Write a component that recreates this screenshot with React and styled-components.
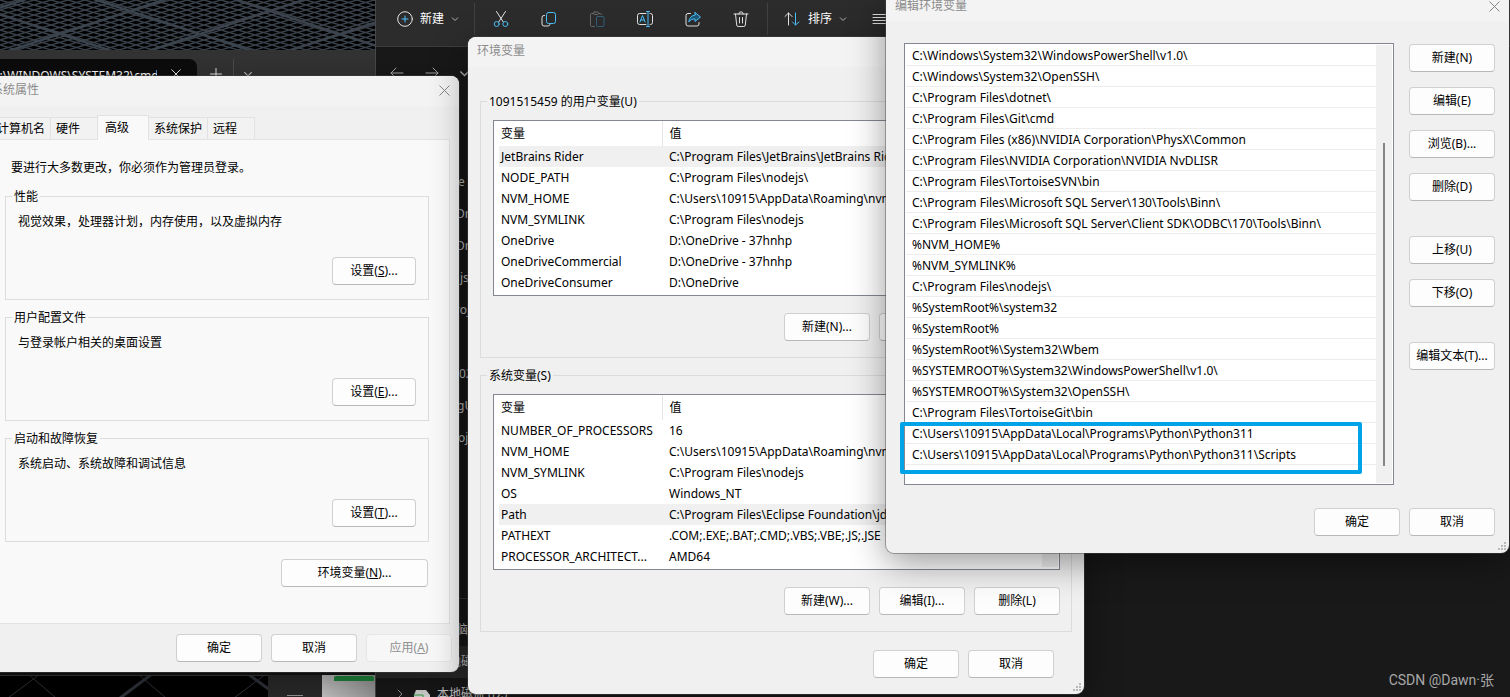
import React, { useState } from "react"
import styled, { createGlobalStyle } from "styled-components"

const GlobalStyle = createGlobalStyle`
  * {
    box-sizing: border-box;
  }

  body {
    margin: 0;
    background: #191919;
    font-family: "Noto Sans", "Noto Sans CJK SC", sans-serif;
    font-size: 12px;
    line-height: 16px;
    color: #000;
  }

  ul {
    list-style: none;
    margin: 0;
    padding: 0;
  }
`

const Desktop = styled.main`
  position: relative;
  height: 100vh;
  overflow: hidden;
  display: grid;
  grid-template-columns: 375px 1fr;
  grid-template-rows: minmax(0, 1fr);
`

/* ---------- things behind the dialogs ---------- */

const LeftSide = styled.div`
  display: flex;
  flex-direction: column;
  background: #000;
  overflow: hidden;
`

const Wallpaper = styled.svg`
  display: block;
  width: 100%;
  height: 50px;
  flex: none;
`

const Terminal = styled.section`
  flex: 1;
  background: #333;
  display: flex;
  align-items: flex-start;
  padding-top: 9px;
  color: #fff;
`

const TerminalTab = styled.div`
  width: 197px;
  height: 34px;
  padding-right: 16px;
  display: flex;
  align-items: center;
  justify-content: space-between;
  border-radius: 0 8px 0 0;
  background: #0c0c0c;

  span {
    width: 157px;
    overflow: hidden;
    white-space: nowrap;
    text-indent: -8px;
  }
  svg {
    margin-bottom: 4px;
  }
`

const TerminalButton = styled.button`
  width: ${p => p.$width}px;
  height: 30px;
  padding: 0;
  border: 0;
  border-left: 1px solid ${p => (p.$divider ? "#4c4c4c" : "transparent")};
  background: none;
  color: #ddd;
  display: flex;
  align-items: center;
  justify-content: center;
`

const BottomStrip = styled.div`
  height: 25px;
  display: flex;
  border-top: 3px solid #141414;
  flex: none;

  > svg {
    flex: 1;
    min-width: 0;
    height: 22px;
    border-top: 1px solid #3a3a3a;
  }
`

const DarkBlock = styled.div`
  width: 54px;
  background: #2b2b2b;
  display: flex;
  align-items: flex-end;
  justify-content: center;
  padding-bottom: 1px;

  i {
    width: 16px;
    height: 1px;
    background: #999;
  }
`

const LightBlock = styled.div`
  width: 53px;
  padding: 1px 1px 0 12px;
  background: linear-gradient(90deg, #c9c9c9, #999);

  i {
    display: block;
    height: 5px;
    border-radius: 2px 2px 0 0;
    background: #1f8a3b;
  }
`

const Explorer = styled.section`
  border-left: 1px solid #484848;
  background: #191919;
  color: #fff;
  overflow: hidden;
`

const Toolbar = styled.header`
  height: 47px;
  padding-bottom: 8px;
  display: flex;
  align-items: center;
  background: #2c2c2c;
  border-bottom: 1px solid #3d3d3d;
`

const ToolButton = styled.button`
  width: ${p => p.$width || 48}px;
  height: 38px;
  padding: 0 0 0 ${p => p.$inset || 0}px;
  border: 0;
  background: none;
  color: #fff;
  font: inherit;
  display: flex;
  align-items: center;
  justify-content: center;
  gap: 7px;
`

const ToolDivider = styled.i`
  width: 1px;
  height: 32px;
  margin: 0 2px;
  background: #424242;
`

const NavBar = styled.div`
  height: 52px;
  padding-left: 13px;
  display: flex;
  align-items: center;
  gap: 19px;
  color: #aaa;
`

const SideRow = styled.li`
  width: 200px;
  height: 32px;
  padding-left: ${p => p.$indent || 0}px;
  display: flex;
  align-items: center;
  gap: 5px;
  color: #ccc;
  white-space: nowrap;
  background: ${p => (p.$active ? "#2d2d2d" : "none")};
`

const SideLine = styled.i`
  flex: 1;
  height: 1px;
  background: #3a3a3a;
`

const SideList = styled.ul`
  padding-top: 67px;
`

/* ---------- dialog parts ---------- */

const Dialog = styled.section`
  position: absolute;
  left: ${p => p.$x}px;
  top: ${p => p.$y}px;
  width: ${p => p.$width}px;
  border-radius: 8px;
  overflow: hidden;
  background: #f0f0f0;
  box-shadow: 0 0 0 1px rgba(70, 70, 70, 0.45), 0 10px 36px rgba(0, 0, 0, 0.4);
`

const TitleBar = styled.header`
  height: 30px;
  padding: 0 9px 2px;
  display: flex;
  align-items: center;
  justify-content: space-between;
  background: #f3f3f3;
  color: #8c8c8c;

  h1 {
    margin: 0;
    font-size: 12px;
    font-weight: 400;
  }

  button {
    padding: 0;
    border: 0;
    background: none;
    display: flex;
    color: #868686;
  }
`

const Button = styled.button`
  width: ${p => p.$width || 86}px;
  height: 28px;
  padding: 0;
  flex: none;
  border: 1px solid #d0d0d0;
  border-bottom-color: #b8b8b8;
  border-radius: 4px;
  background: #fdfdfd;
  color: #000;
  font: inherit;
  white-space: nowrap;

  &:hover {
    background: #e5f1fb;
  }
  &:disabled {
    border-color: #e6e6e6;
    background: #f7f7f7;
    color: #8f8f8f;
  }
`

const ButtonRow = styled.div`
  display: flex;
  justify-content: flex-end;
  gap: 9px;
  padding: ${p => p.$pad || 0};
`

const Group = styled.fieldset`
  min-width: 0;
  margin: 0 0 8px;
  padding: ${p => p.$pad};
  border: 1px solid #dcdcdc;

  legend {
    margin-left: -6px;
    padding: 2px 2px 0;
  }
  p {
    margin: 9px 0 27px;
  }
`

const Grip = styled.svg`
  position: absolute;
  right: 2px;
  bottom: 2px;
`

/* system properties */

const Tabs = styled.div`
  display: flex;
  align-items: flex-end;
  height: 24px;
  margin: 9px 0 0 9px;
`

const Tab = styled.button`
  height: ${p => (p.$active ? 25 : 22)}px;
  min-width: ${p => (p.$active ? 52 : 48)}px;
  margin: 0 -1px ${p => (p.$active ? -1 : 0)}px 0;
  padding: 0 ${p => (p.$active ? 7 : 5)}px;
  position: relative;
  border: 1px solid #e2e2e2;
  border-bottom: 0;
  background: ${p => (p.$active ? "#f9f9f9" : "#f2f2f2")};
  font: inherit;
  color: #000;
  text-align: left;
`

const TabPanel = styled.div`
  margin: 0 9px 0 8px;
  padding: 20px 20px 36px 14px;
  border: 1px solid #e2e2e2;
  background: #f9f9f9;
`

const Notice = styled.p`
  margin: 0 0 11px 6px;
`

/* variables */

const GroupBody = styled.div`
  padding: 25px 12px 0;
`

const TableFrame = styled.div`
  display: flex;
  margin: 10px 0 17px;
  padding: 0 1px 2px 5px;
  border: 1px solid #828790;
  background: #fff;
`

const Table = styled.table`
  flex: 1;
  table-layout: fixed;
  border-collapse: collapse;
  white-space: nowrap;
  overflow: hidden;

  th,
  td {
    height: 21px;
    padding: 0 0 0 7px;
    font-weight: 400;
    text-align: left;
    overflow: hidden;
  }
  th {
    height: 25px;
  }
  th:first-child {
    width: 163px;
    border-right: 1px solid #e5e5e5;
  }
  th:first-child,
  td:first-child {
    padding-left: 2px;
  }
`

const Row = styled.tr`
  background: ${p => (p.$selected ? "#f0f0f0" : "none")};
`

const Track = styled.div`
  width: 16px;
  flex: none;
  background: #f0f0f0;
`

/* path editor */

const Editor = styled.div`
  display: flex;
  gap: 15px;
  padding: 21px 14px 0 18px;
`

const PathFrame = styled.div`
  position: relative;
  flex: 1;
  display: flex;
  padding: 1px;
  border: 1px solid #828790;
  background: #fff;

  ul {
    flex: 1;
    padding-bottom: 18px;
  }
`

const PathRow = styled.li`
  height: 21px;
  padding-left: 6px;
  line-height: 22px;
  border-bottom: 1px solid #ededed;
  white-space: nowrap;
`

const Thumb = styled.div`
  width: 2px;
  height: 323px;
  margin: 98px 0 0 7px;
  background: #868686;
`

const Marker = styled.div`
  position: absolute;
  left: -5px;
  top: 378px;
  width: 462px;
  height: 52px;
  border: 4px solid #00a2e8;
  border-radius: 2px;
`

const ButtonColumn = styled.div`
  display: flex;
  flex-direction: column;
  gap: 15px;
  padding-top: 1px;
`

const Spacer = styled.i`
  height: 5px;
`

const Watermark = styled.footer`
  position: absolute;
  right: 16px;
  bottom: 7px;
  font-family: Roboto, "Noto Sans CJK SC", sans-serif;
  font-size: 14px;
  line-height: 20px;
  color: #a8a8a8;
`

const userVars = [
  ["JetBrains Rider", "C:\\Program Files\\JetBrains\\JetBrains Rider"],
  ["NODE_PATH", "C:\\Program Files\\nodejs\\"],
  ["NVM_HOME", "C:\\Users\\10915\\AppData\\Roaming\\nvm"],
  ["NVM_SYMLINK", "C:\\Program Files\\nodejs"],
  ["OneDrive", "D:\\OneDrive - 37hnhp"],
  ["OneDriveCommercial", "D:\\OneDrive - 37hnhp"],
  ["OneDriveConsumer", "D:\\OneDrive"],
]

const systemVars = [
  ["NUMBER_OF_PROCESSORS", "16"],
  ["NVM_HOME", "C:\\Users\\10915\\AppData\\Roaming\\nvm"],
  ["NVM_SYMLINK", "C:\\Program Files\\nodejs"],
  ["OS", "Windows_NT"],
  ["Path", "C:\\Program Files\\Eclipse Foundation\\jdk"],
  ["PATHEXT", ".COM;.EXE;.BAT;.CMD;.VBS;.VBE;.JS;.JSE"],
  ["PROCESSOR_ARCHITECT...", "AMD64"],
]

const paths = [
  "C:\\Windows\\System32\\WindowsPowerShell\\v1.0\\",
  "C:\\Windows\\System32\\OpenSSH\\",
  "C:\\Program Files\\dotnet\\",
  "C:\\Program Files\\Git\\cmd",
  "C:\\Program Files (x86)\\NVIDIA Corporation\\PhysX\\Common",
  "C:\\Program Files\\NVIDIA Corporation\\NVIDIA NvDLISR",
  "C:\\Program Files\\TortoiseSVN\\bin",
  "C:\\Program Files\\Microsoft SQL Server\\130\\Tools\\Binn\\",
  "C:\\Program Files\\Microsoft SQL Server\\Client SDK\\ODBC\\170\\Tools\\Binn\\",
  "%NVM_HOME%",
  "%NVM_SYMLINK%",
  "C:\\Program Files\\nodejs\\",
  "%SystemRoot%\\system32",
  "%SystemRoot%",
  "%SystemRoot%\\System32\\Wbem",
  "%SYSTEMROOT%\\System32\\WindowsPowerShell\\v1.0\\",
  "%SYSTEMROOT%\\System32\\OpenSSH\\",
  "C:\\Program Files\\TortoiseGit\\bin",
  "C:\\Users\\10915\\AppData\\Local\\Programs\\Python\\Python311",
  "C:\\Users\\10915\\AppData\\Local\\Programs\\Python\\Python311\\Scripts",
]

const sections = [
  { title: "性能", text: "视觉效果，处理器计划，内存使用，以及虚拟内存", key: "S" },
  { title: "用户配置文件", text: "与登录帐户相关的桌面设置", key: "E" },
  { title: "启动和故障恢复", text: "系统启动、系统故障和调试信息", key: "T" },
]

const sideItems = [
  { text: "e", indent: 82 },
  { text: "Dr", indent: 80 },
  { text: "Dr", indent: 80 },
  { text: "js", indent: 84 },
  { text: "roj", indent: 79 },
  {},
  { text: "02", indent: 83 },
  { text: "gU", indent: 81 },
  { text: "oj", indent: 82 },
  {},
  {},
  {},
  {},
  { line: true },
  { text: "此电脑", indent: 56 },
  { text: "本地磁盘", indent: 61, active: true },
]

const W = "#e6e6e6"
const B = "#4cc2ff"

function Icon({ size = 18, children }) {
  return (
    <svg width={size} height={size} viewBox={`0 0 ${size} ${size}`} fill="none" stroke={W} strokeLinecap="round" strokeLinejoin="round" aria-hidden="true">
      {children}
    </svg>
  )
}

const Chevron = ({ size = 8 }) => (
  <svg width={size} height={size} viewBox="0 0 8 8" fill="none" stroke="#b5b5b5" aria-hidden="true">
    <path d="M1 2.5l3 3 3-3" />
  </svg>
)

const Cross = ({ size = 11 }) => (
  <svg width={size} height={size} viewBox="0 0 11 11" fill="none" stroke="currentColor" aria-hidden="true">
    <path d="M.5 .5l10 10M10.5 .5l-10 10" />
  </svg>
)

function MeshWallpaper() {
  return (
    <Wallpaper aria-hidden="true">
      <defs>
        <pattern id="mesh" width="17" height="5" patternUnits="userSpaceOnUse">
          <path d="M-3.4 -1L20.4 6M-3.4 6L20.4 -1" stroke="#3a424c" strokeWidth="1.3" />
        </pattern>
        <pattern id="bands" width="140" height="46" x="60" y="-12" patternUnits="userSpaceOnUse">
          <path d="M-7 -2.3L147 48.3M-7 48.3L147 -2.3" stroke="#3b434d" strokeWidth="2.5" />
        </pattern>
      </defs>
      <rect width="100%" height="50" fill="#000" />
      <rect width="100%" height="50" fill="url(#mesh)" />
      <rect width="100%" height="50" fill="url(#bands)" />
    </Wallpaper>
  )
}

function ExplorerWindow() {
  return (
    <Explorer>
      <Toolbar>
        <ToolButton $width={96} $inset={8}>
          <Icon size={16}>
            <circle cx="8" cy="8" r="7.3" />
            <path d="M8 5v6M5 8h6" stroke={B} />
          </Icon>
          <span>新建</span>
          <Chevron />
        </ToolButton>
        <ToolDivider />
        <ToolButton aria-label="剪切">
          <Icon>
            <path d="M4.5 1.5l6.8 10.5M13.5 1.5L6.7 12" />
            <circle cx="4.7" cy="14" r="2.5" stroke={B} />
            <circle cx="13.3" cy="14" r="2.5" stroke={B} />
          </Icon>
        </ToolButton>
        <ToolButton aria-label="复制">
          <Icon>
            <path d="M4.5 5.5H4a2 2 0 0 0-2 2V14a2 2 0 0 0 2 2h4a2 2 0 0 0 2-1.5" />
            <rect x="6.5" y="2.5" width="9" height="11" rx="2" stroke={B} />
          </Icon>
        </ToolButton>
        <ToolButton aria-label="粘贴">
          <Icon>
            <path d="M5.5 3.500h-2a1 1 0 0 0-1 1v11a1 1 0 0 0 1 1h3M10.5 3.500h2a1 1 0 0 1 1 1" stroke="#6b6b6b" />
            <rect x="5.5" y="2" width="5" height="2.5" rx="1" stroke="#6b6b6b" />
            <rect x="8.5" y="6.5" width="7.5" height="10" rx="1" stroke="#35617a" />
          </Icon>
        </ToolButton>
        <ToolButton aria-label="重命名">
          <Icon>
            <path d="M10 3.500H3.500a2 2 0 0 0-2 2v7a2 2 0 0 0 2 2H10M14 3.500h.5a2 2 0 0 1 2 2v7a2 2 0 0 1-2 2H14" />
            <path d="M12 1.500v15M10.500 1.500h3M10.500 16.500h3M4 12l2.500-6.500L9 12M5 10h3" stroke={B} />
          </Icon>
        </ToolButton>
        <ToolButton aria-label="共享">
          <Icon>
            <path d="M6.500 3.500H4a2 2 0 0 0-2 2V14a2 2 0 0 0 2 2h9a2 2 0 0 0 2-2v-1.500" />
            <path d="M11 2.500l5.500 4.500-5.500 4.500V9C8 8.800 6.200 10 4.800 12 5.200 8 7.500 5.400 11 5z" stroke={B} fill="#1f5877" />
          </Icon>
        </ToolButton>
        <ToolButton aria-label="删除">
          <Icon>
            <path d="M2 4h14M6.800 4a2.200 2.200 0 0 1 4.400 0M3.500 4l1.200 11a1.500 1.500 0 0 0 1.500 1.500h5.600a1.500 1.500 0 0 0 1.500-1.500L14.500 4M7.500 7.500v5.500M10.500 7.500v5.500" />
          </Icon>
        </ToolButton>
        <ToolDivider />
        <ToolButton $width={90}>
          <Icon>
            <path d="M5.500 15V3M2 6.500L5.500 3 9 6.500" />
            <path d="M12.500 3v12M9.500 12l3 3 3.500-3" stroke={B} />
          </Icon>
          <span>排序</span>
          <Chevron />
        </ToolButton>
        <ToolButton $width={40} aria-label="查看">
          <Icon size={16}>
            <path d="M1 3.500h14M1 6.500h14M1 9.500h14M1 12.500h14" />
          </Icon>
        </ToolButton>
      </Toolbar>
      <NavBar>
        <Icon size={16}>
          <path d="M14 8H2M7 3L2 8l5 5" stroke="#aaa" />
        </Icon>
        <Icon size={16}>
          <path d="M2 8h12M9 3l5 5-5 5" stroke="#aaa" />
        </Icon>
        <Chevron size={11} />
      </NavBar>
      <SideList>
        {sideItems.map((item, i) => (
          <SideRow key={i} $indent={item.indent} $active={item.active}>
            {item.line ? <SideLine /> : item.text}
          </SideRow>
        ))}
        <SideRow $indent={19}>
          <Icon size={10}>
            <path d="M3 1l4 4-4 4" stroke="#999" />
          </Icon>
          <Icon size={22}>
            <path d="M6 7h10l4 5v5H4v-5z" fill="#d8d8d8" stroke="none" />
            <path d="M4 12h9v4" stroke="#2ea043" />
          </Icon>
          本地磁盘 (D:)
        </SideRow>
      </SideList>
    </Explorer>
  )
}

function DialogWindow({ title, x, y, width, closable, grip, children }) {
  return (
    <Dialog $x={x} $y={y} $width={width} role="dialog" aria-label={title}>
      <TitleBar>
        <h1>{title}</h1>
        {closable && (
          <button aria-label="关闭">
            <Cross />
          </button>
        )}
      </TitleBar>
      {children}
      {grip && (
        <Grip width="9" height="9" fill="#b9b9b9" aria-hidden="true">
          <path d="M6 0h2v2H6zM3 3h2v2H3zM6 3h2v2H6zM0 6h2v2H0zM3 6h2v2H3zM6 6h2v2H6z" />
        </Grip>
      )}
    </Dialog>
  )
}

function SystemProperties() {
  const [tab, setTab] = useState("高级")

  return (
    <DialogWindow title="系统属性" x={-18} y={76} width={477} closable>
      <Tabs role="tablist">
        {["计算机名", "硬件", "高级", "系统保护", "远程"].map(name => (
          <Tab key={name} role="tab" aria-selected={tab === name} $active={tab === name} onClick={() => setTab(name)}>
            {name}
          </Tab>
        ))}
      </Tabs>
      <TabPanel role="tabpanel">
        <Notice>要进行大多数更改，你必须作为管理员登录。</Notice>
        {sections.map(s => (
          <Group key={s.title} $pad="0 12px 14px">
            <legend>{s.title}</legend>
            <p>{s.text}</p>
            <ButtonRow>
              <Button $width={84}>
                设置(<u>{s.key}</u>)...
              </Button>
            </ButtonRow>
          </Group>
        ))}
        <ButtonRow $pad="9px 1px 0">
          <Button $width={147}>
            环境变量(<u>N</u>)...
          </Button>
        </ButtonRow>
      </TabPanel>
      <ButtonRow $pad="10px 7px">
        <Button>确定</Button>
        <Button>取消</Button>
        <Button disabled>
          应用(<u>A</u>)
        </Button>
      </ButtonRow>
    </DialogWindow>
  )
}

function VariableGroup({ title, rows, initial, buttons }) {
  const [selected, setSelected] = useState(initial)

  return (
    <Group $pad="0 11px 16px 12px">
      <legend>{title}</legend>
      <TableFrame>
        <Table>
          <thead>
            <tr>
              <th>变量</th>
              <th>值</th>
            </tr>
          </thead>
          <tbody>
            {rows.map(([name, value]) => (
              <Row key={name} $selected={name === selected} onClick={() => setSelected(name)}>
                <td>{name}</td>
                <td>{value}</td>
              </Row>
            ))}
          </tbody>
        </Table>
        <Track />
      </TableFrame>
      <ButtonRow>
        {buttons.map(b => (
          <Button key={b}>{b}</Button>
        ))}
      </ButtonRow>
    </Group>
  )
}

function EnvironmentVariables() {
  return (
    <DialogWindow title="环境变量" x={468} y={37} width={616} grip>
      <GroupBody>
        <VariableGroup title="1091515459 的用户变量(U)" rows={userVars} initial="JetBrains Rider" buttons={["新建(N)...", "编辑(E)...", "删除(D)"]} />
        <VariableGroup title="系统变量(S)" rows={systemVars} initial="Path" buttons={["新建(W)...", "编辑(I)...", "删除(L)"]} />
      </GroupBody>
      <ButtonRow $pad="10px 30px 16px">
        <Button>确定</Button>
        <Button>取消</Button>
      </ButtonRow>
    </DialogWindow>
  )
}

function PathEditor() {
  return (
    <DialogWindow title="编辑环境变量" x={886} y={-8} width={623} closable grip>
      <Editor>
        <PathFrame>
          <ul>
            {paths.map(p => (
              <PathRow key={p}>{p}</PathRow>
            ))}
          </ul>
          <Track>
            <Thumb />
          </Track>
          <Marker />
        </PathFrame>
        <ButtonColumn>
          <Button>新建(N)</Button>
          <Button>编辑(E)</Button>
          <Button>浏览(B)...</Button>
          <Button>删除(D)</Button>
          <Spacer />
          <Button>上移(U)</Button>
          <Button>下移(O)</Button>
          <Spacer />
          <Button>编辑文本(T)...</Button>
        </ButtonColumn>
      </Editor>
      <ButtonRow $pad="23px 14px 17px">
        <Button>确定</Button>
        <Button>取消</Button>
      </ButtonRow>
    </DialogWindow>
  )
}

export default function App() {
  return (
    <>
      <GlobalStyle />
      <Desktop>
        <LeftSide>
          <MeshWallpaper />
          <Terminal>
            <TerminalTab>
              <span>C:\WINDOWS\SYSTEM32\cmd.exe</span>
              <Cross size={10} />
            </TerminalTab>
            <TerminalButton $width={36} aria-label="新标签页">
              <Icon size={12}>
                <path d="M6 .5v11M.5 6h11" />
              </Icon>
            </TerminalButton>
            <TerminalButton $width={29} $divider aria-label="更多">
              <Chevron size={10} />
            </TerminalButton>
          </Terminal>
          <BottomStrip>
            <svg aria-hidden="true" stroke="#30353c">
              <path d="M8 22L40 -2M28 -2l28 24M234 22l32-24" />
              <path d="M120 22l32-24M248 -2l22 16" strokeWidth="3" />
              <path d="M138 -2l28 24" />
            </svg>
            <DarkBlock>
              <i />
            </DarkBlock>
            <LightBlock>
              <i />
            </LightBlock>
          </BottomStrip>
        </LeftSide>
        <ExplorerWindow />
        <SystemProperties />
        <EnvironmentVariables />
        <PathEditor />
        <Watermark>CSDN @Dawn·张</Watermark>
      </Desktop>
    </>
  )
}
